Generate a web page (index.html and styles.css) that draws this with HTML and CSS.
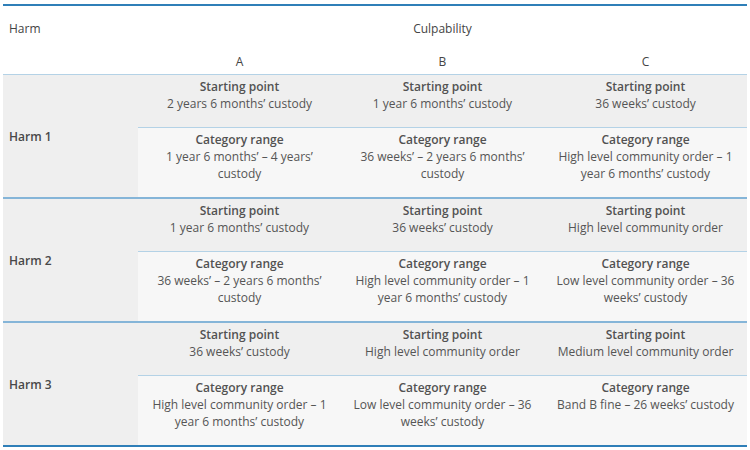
FILE: index.html
```html
<!DOCTYPE html>
<html lang="en">
<head>
<meta charset="utf-8">
<title>Culpability and harm</title>
<link rel="stylesheet" href="styles.css">
</head>
<body>
<table class="grid">
  <colgroup>
    <col class="col-harm">
    <col class="col-cat">
    <col class="col-cat">
    <col class="col-cat">
  </colgroup>
  <thead>
    <tr class="head-top">
      <th class="harm-head">Harm</th>
      <th colspan="3" class="culp-head">Culpability</th>
    </tr>
    <tr class="head-letters">
      <th></th>
      <th>A</th>
      <th>B</th>
      <th>C</th>
    </tr>
  </thead>
  <tbody>
    <tr class="sp first">
      <th rowspan="2" class="harm">Harm 1</th>
      <td><span class="lbl">Starting point</span>2 years 6 months’ custody</td>
      <td><span class="lbl">Starting point</span>1 year 6 months’ custody</td>
      <td><span class="lbl">Starting point</span>36 weeks’ custody</td>
    </tr>
    <tr class="cr">
      <td><span class="lbl">Category range</span>1 year 6 months’ – 4 years’ custody</td>
      <td><span class="lbl">Category range</span>36 weeks’ – 2 years 6 months’ custody</td>
      <td><span class="lbl">Category range</span>High level community order – 1 year 6 months’ custody</td>
    </tr>
    <tr class="sp">
      <th rowspan="2" class="harm">Harm 2</th>
      <td><span class="lbl">Starting point</span>1 year 6 months’ custody</td>
      <td><span class="lbl">Starting point</span>36 weeks’ custody</td>
      <td><span class="lbl">Starting point</span>High level community order</td>
    </tr>
    <tr class="cr">
      <td><span class="lbl">Category range</span>36 weeks’ – 2 years 6 months’ custody</td>
      <td><span class="lbl">Category range</span>High level community order – 1 year 6 months’ custody</td>
      <td><span class="lbl">Category range</span>Low level community order – 36 weeks’ custody</td>
    </tr>
    <tr class="sp">
      <th rowspan="2" class="harm">Harm 3</th>
      <td><span class="lbl">Starting point</span>36 weeks’ custody</td>
      <td><span class="lbl">Starting point</span>High level community order</td>
      <td><span class="lbl">Starting point</span>Medium level community order</td>
    </tr>
    <tr class="cr last">
      <td><span class="lbl">Category range</span>High level community order – 1 year 6 months’ custody</td>
      <td><span class="lbl">Category range</span>Low level community order – 36 weeks’ custody</td>
      <td><span class="lbl">Category range</span>Band B fine – 26 weeks’ custody</td>
    </tr>
  </tbody>
</table>
</body>
</html>
```
FILE: styles.css
```css
html, body {
  margin: 0;
  padding: 0;
  background: #ffffff;
}

body {
  padding: 4px 3px 0 3px;
  font-family: "Open Sans", "Liberation Sans", sans-serif;
  font-size: 12px;
  line-height: 17px;
  color: #555555;
}

.grid {
  width: 744px;
  border-collapse: collapse;
  table-layout: fixed;
  border-top: 2px solid #2f7fb8;
  border-bottom: 2px solid #2f7fb8;
}

.col-harm {
  width: 135px;
}

th {
  font-weight: 400;
}

.head-top th {
  padding: 14px 6px 12px 6px;
  color: #444444;
  vertical-align: middle;
}

.harm-head {
  text-align: left;
}

.culp-head {
  text-align: center;
}

.head-letters th {
  padding: 4px 8px 4px 8px;
  text-align: center;
  color: #444444;
  border-bottom: 1px solid #b4d2e6;
}

.harm {
  text-align: left;
  vertical-align: middle;
  padding: 0 6px;
  background: #efefef;
  color: #484848;
  font-weight: 600;
}

tbody td {
  text-align: center;
  vertical-align: top;
  padding: 3px 8px 15px 8px;
}

.sp td {
  background: #efefef;
  border-bottom: 1px solid #b4d2e6;
}

.cr td {
  background: #f7f7f7;
}

.cr {
  border-bottom: 2px solid #85b5d8;
}

.cr.last {
  border-bottom: 2px solid #2f7fb8;
}

.lbl {
  display: block;
  font-weight: 600;
  color: #525252;
}
```
